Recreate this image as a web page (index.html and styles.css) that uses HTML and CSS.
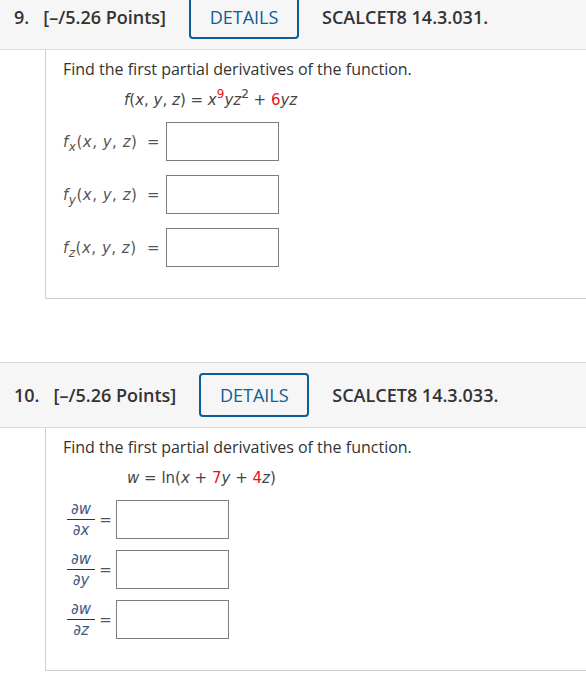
FILE: index.html
```html
<!DOCTYPE html>
<html>
<head>
<meta charset="utf-8">
<link rel="stylesheet" href="styles.css">
</head>
<body>
<div class="page">
  <section class="question">
    <div class="qhead">
      <span class="qnum">9.</span>
      <span class="qpts">[–/5.26 Points]</span>
      <button class="details">DETAILS</button>
      <span class="qcode">SCALCET8 14.3.031.</span>
    </div>
    <div class="qbody q1">
      <p class="prompt">Find the first partial derivatives of the function.</p>
      <p class="formula"><i>f</i>(<i>x</i>, <i>y</i>, <i>z</i>) = <i>x</i><sup class="red">9</sup><i>yz</i><sup>2</sup> + <span class="red">6</span><i>yz</i></p>
      <div class="rows">
        <div class="row"><span class="lbl"><i>f</i><sub><i>x</i></sub>(<i>x</i>, <i>y</i>, <i>z</i>)</span><span class="eq">=</span><span class="box"></span></div>
        <div class="row"><span class="lbl"><i>f</i><sub><i>y</i></sub>(<i>x</i>, <i>y</i>, <i>z</i>)</span><span class="eq">=</span><span class="box"></span></div>
        <div class="row"><span class="lbl"><i>f</i><sub><i>z</i></sub>(<i>x</i>, <i>y</i>, <i>z</i>)</span><span class="eq">=</span><span class="box"></span></div>
      </div>
    </div>
  </section>
  <section class="question second">
    <div class="qhead">
      <span class="qnum">10.</span>
      <span class="qpts">[–/5.26 Points]</span>
      <button class="details">DETAILS</button>
      <span class="qcode">SCALCET8 14.3.033.</span>
    </div>
    <div class="qbody q2">
      <p class="prompt">Find the first partial derivatives of the function.</p>
      <p class="formula f2"><i>w</i> = ln(<i>x</i> + <span class="red">7</span><i>y</i> + <span class="red">4</span><i>z</i>)</p>
      <div class="frows">
        <div class="frow"><span class="frac"><span class="num">∂<i>w</i></span><span class="den">∂<i>x</i></span></span><span class="eq2">=</span><span class="box"></span></div>
        <div class="frow"><span class="frac"><span class="num">∂<i>w</i></span><span class="den">∂<i>y</i></span></span><span class="eq2">=</span><span class="box"></span></div>
        <div class="frow"><span class="frac"><span class="num">∂<i>w</i></span><span class="den">∂<i>z</i></span></span><span class="eq2">=</span><span class="box"></span></div>
      </div>
    </div>
  </section>
</div>
</body>
</html>
```

FILE: styles.css
```css
html, body {
  margin: 0;
  padding: 0;
  background: #fff;
  overflow: hidden;
}
.page {
  margin-top: -16px;
  font-family: "Open Sans", "Liberation Sans", sans-serif;
  color: #333;
}
.question.second {
  margin-top: 63px;
}
.qhead {
  height: 64px;
  background: #f6f6f6;
  border-top: 1px solid #dcdcdc;
  border-bottom: 1px solid #dcdcdc;
  display: flex;
  align-items: center;
  padding-left: 14px;
  font-size: 18px;
  font-weight: 600;
  color: #333;
}
.qnum {
  margin-right: 14px;
}
.details {
  margin-left: 23px;
  margin-right: 23px;
  width: 110px;
  height: 44px;
  border: 2px solid #0b5e98;
  border-radius: 4px;
  background: transparent;
  color: #0b5e98;
  font-family: "Open Sans", "Liberation Sans", sans-serif;
  font-size: 18px;
  font-weight: 500;
  padding: 0;
}
.qbody {
  margin-left: 45px;
  border-left: 1px solid #cfcfcf;
  border-bottom: 1px solid #cfcfcf;
  padding-left: 17px;
}
.q1 {
  height: 239px;
  padding-top: 9px;
}
.q2 {
  height: 233px;
  padding-top: 9px;
}
.prompt {
  margin: 0;
  font-size: 16px;
  line-height: 21px;
  color: #333;
}
.formula {
  margin: 10px 0 0 61px;
  font-family: "DejaVu Sans", Verdana, sans-serif;
  font-size: 15px;
  line-height: 20px;
  color: #444;
}
.f2 {
  margin-left: 64px;
}
.formula i, .lbl i, .frac i {
  font-style: italic;
}
.formula sup {
  font-size: 12px;
  line-height: 0;
  vertical-align: 7px;
}
.red {
  color: #e8141a;
}
.rows {
  margin-top: 12px;
  display: flex;
  flex-direction: column;
  gap: 14px;
}
.row {
  display: flex;
  align-items: center;
  height: 39px;
}
.lbl {
  font-family: "DejaVu Sans", Verdana, sans-serif;
  font-size: 15px;
  color: #555;
  width: 84px;
  letter-spacing: 0.5px;
}
.lbl sub {
  font-size: 12px;
  line-height: 0;
  vertical-align: -4px;
}
.eq {
  font-family: "DejaVu Sans", Verdana, sans-serif;
  font-size: 15px;
  color: #555;
  width: 19px;
}
.box {
  display: block;
  width: 111px;
  height: 37px;
  border: 1px solid #7d7d7d;
  background: #fff;
}
.frows {
  margin-top: 12px;
  margin-left: 4px;
  display: flex;
  flex-direction: column;
  gap: 11px;
}
.frow {
  display: flex;
  align-items: center;
  height: 39px;
}
.frac {
  display: inline-flex;
  flex-direction: column;
  align-items: center;
  width: 28px;
  font-family: "DejaVu Sans", Verdana, sans-serif;
  font-size: 15px;
  color: #3d5a80;
}
.num {
  display: block;
  width: 100%;
  text-align: center;
  border-bottom: 1px solid #333;
  line-height: 18px;
  padding-bottom: 1px;
}
.den {
  display: block;
  line-height: 18px;
  padding-top: 1px;
}
.eq2 {
  font-family: "DejaVu Sans", Verdana, sans-serif;
  font-size: 15px;
  color: #555;
  width: 21px;
  text-align: center;
}
```
